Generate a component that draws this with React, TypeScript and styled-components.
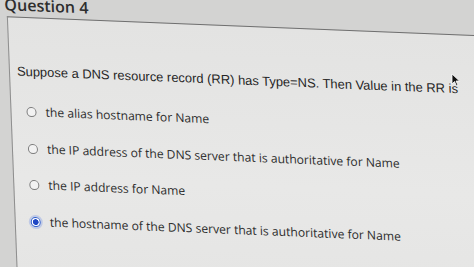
import React from "react";
import styled, { createGlobalStyle } from "styled-components";

const Global = createGlobalStyle`
  html, body { margin: 0; padding: 0; }
  body {
    width: 474px;
    height: 267px;
    overflow: hidden;
    background: #d9d9d8;
    font-family: "Open Sans", "Liberation Sans", sans-serif;
    color: #2b2b2b;
  }
`;

const Page = styled.div`
  position: relative;
  width: 474px;
  height: 267px;
  overflow: hidden;
  background: #d3d3d2;
`;

const Tilted = styled.div`
  transform: skewX(2.2deg) skewY(2.3deg);
  transform-origin: 0 0;
  width: 520px;
`;

const Heading = styled.h2`
  margin: -6px 0 0 4px;
  font-family: "Open Sans", sans-serif;
  font-size: 16px;
  font-weight: 600;
  line-height: 20px;
  color: #2e2e2e;
`;

const Card = styled.div`
  margin: 2px 0 0 6px;
  height: 320px;
  border-top: 1.5px solid #6f6f6f;
  border-left: 1.5px solid #8e8e8e;
  background: linear-gradient(180deg, #e3e3e2 0%, #e8e8e7 50%, #e3e3e2 100%);
  padding: 46px 0 0 7px;
  box-sizing: border-box;
`;

const Prompt = styled.p`
  margin: 0 0 24px 0;
  font-family: "Liberation Sans", Arial, sans-serif;
  font-size: 12.9px;
  line-height: 16px;
  color: #262626;
`;

const Options = styled.div`
  display: flex;
  flex-direction: column;
  gap: 20.5px;
  padding-left: 8px;
`;

const Option = styled.label`
  display: flex;
  align-items: center;
  gap: 9px;
  font-family: "Open Sans", sans-serif;
  font-size: 12.1px;
  line-height: 16px;
  color: #2d2d2d;
`;

const Radio = styled.span<{ $checked?: boolean }>`
  flex: none;
  width: 10px;
  height: 10px;
  border-radius: 50%;
  box-sizing: border-box;
  border: 1.3px solid ${(p) => (p.$checked ? "#2f5fd0" : "#7d7d7d")};
  background: ${(p) =>
    p.$checked
      ? "radial-gradient(circle, #1f47c4 0 2.6px, #ffffff 3.1px)"
      : "#f2f2f2"};
  box-shadow: ${(p) => (p.$checked ? "0 0 0 2px rgba(120,150,230,0.35)" : "none")};
`;

const Cursor = styled.svg`
  position: absolute;
  left: 451px;
  top: 73px;
`;

const options = [
  { text: "the alias hostname for Name", checked: false },
  { text: "the IP address of the DNS server that is authoritative for Name", checked: false },
  { text: "the IP address for Name", checked: false },
  { text: "the hostname of the DNS server that is authoritative for Name", checked: true },
];

export default function App() {
  return (
    <>
      <Global />
      <Page>
        <Tilted>
          <Heading>Question 4</Heading>
          <Card>
            <Prompt>
              Suppose a DNS resource record (RR) has Type=NS. Then Value in the RR is
            </Prompt>
            <Options>
              {options.map((o) => (
                <Option key={o.text}>
                  <Radio $checked={o.checked} />
                  {o.text}
                </Option>
              ))}
            </Options>
          </Card>
        </Tilted>
        <Cursor width="9" height="14" viewBox="0 0 9 14">
          <path d="M1 1 L1 11 L3.5 8.5 L5.5 13 L7 12.3 L5 8 L8.5 8 Z" fill="#111" stroke="#fff" strokeWidth="0.8" />
        </Cursor>
      </Page>
    </>
  );
}
